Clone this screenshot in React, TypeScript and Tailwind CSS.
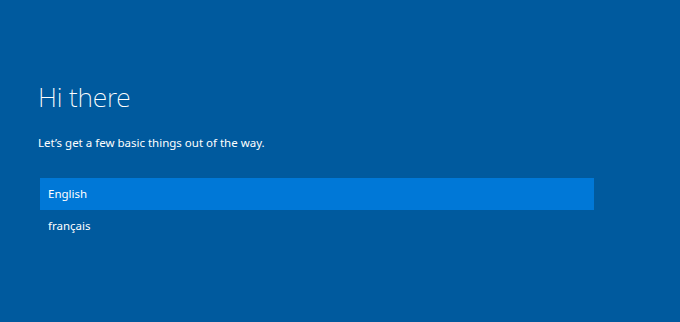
export default function App() {
  return (
    <div
      className="w-[680px] h-[322px] bg-[#005a9e] text-white overflow-hidden"
      style={{ fontFamily: '"Noto Sans", "Open Sans", sans-serif' }}
    >
      <div className="pl-[38px] pt-[81px]">
        <h1 className="text-[26.5px] leading-[32px] font-extralight tracking-[-0.2px]">Hi there</h1>
        <p className="mt-[22px] text-[11.5px] leading-[16px]">Let’s get a few basic things out of the way.</p>
      </div>
      <div className="ml-[40px] mt-[27px] w-[554px] flex flex-col">
        <div className="h-[32px] bg-[#0078d7] flex items-center pl-[8px] text-[11.5px]">English</div>
        <div className="h-[32px] flex items-center pl-[8px] text-[11.5px]">français</div>
      </div>
    </div>
  );
}
